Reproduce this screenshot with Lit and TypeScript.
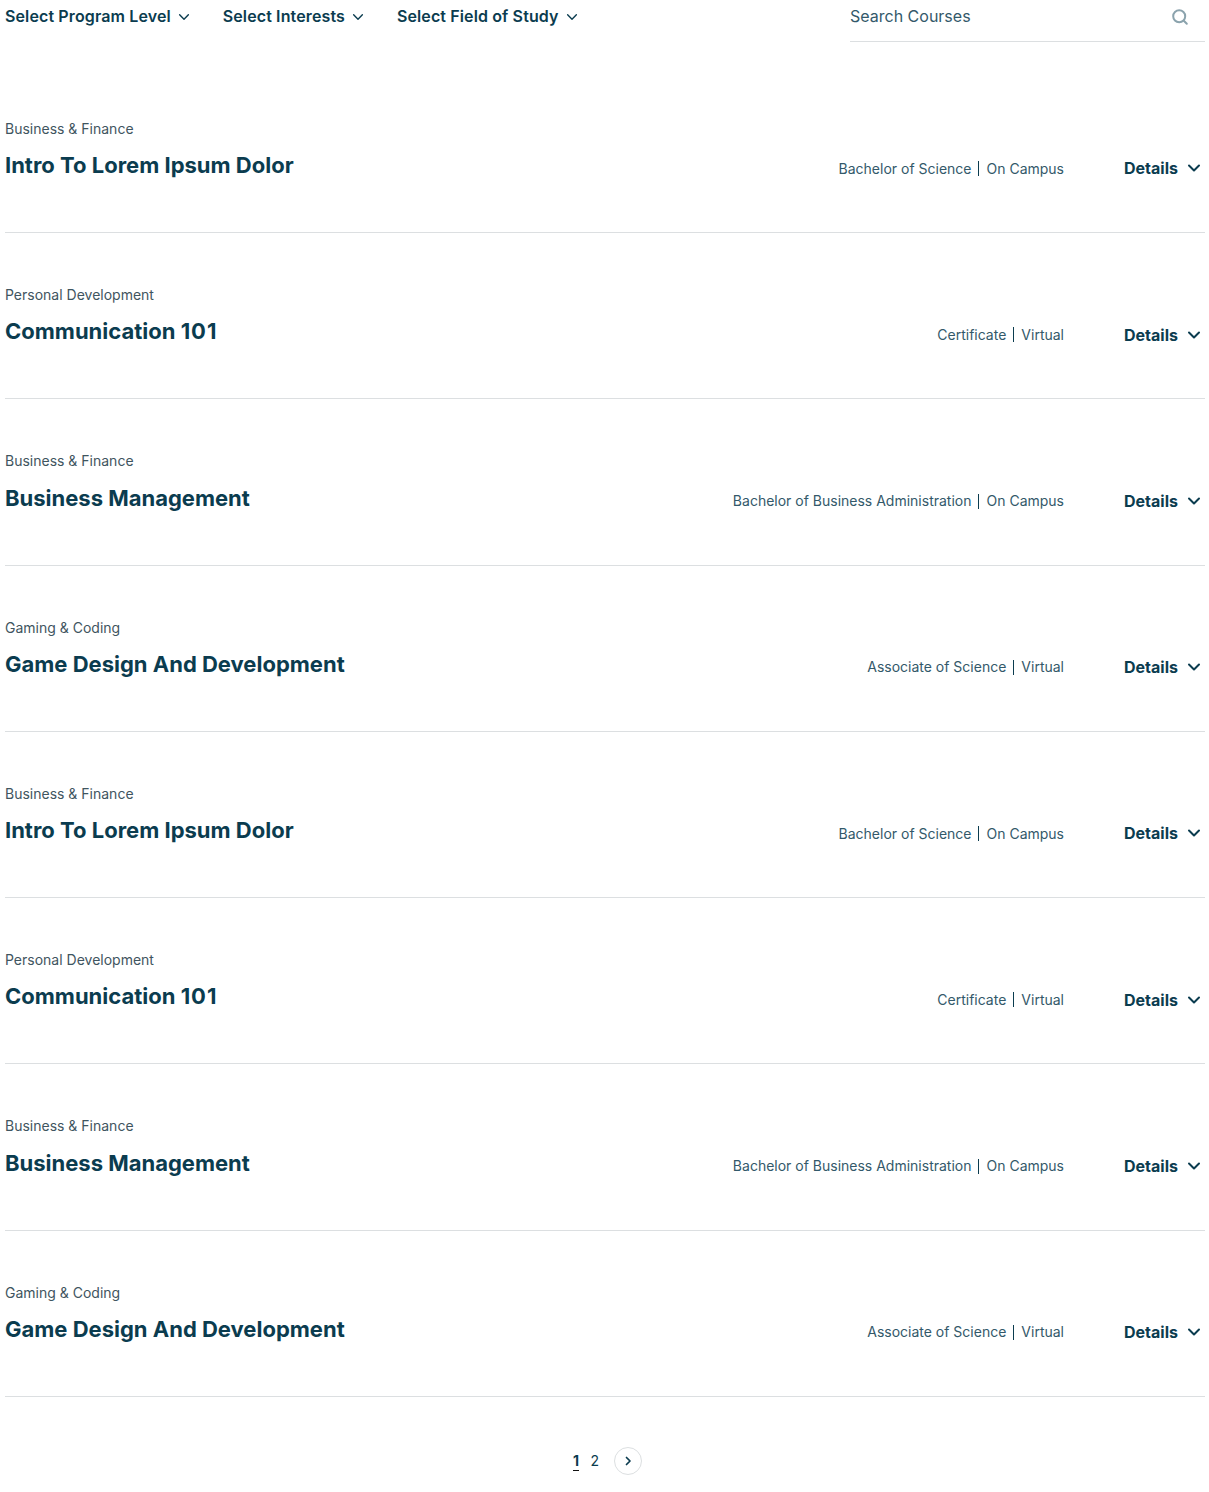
import { LitElement, html, css, svg } from 'lit';
import { customElement } from 'lit/decorators.js';

const chevron = (size: number, width: number) => html`
  <svg width=${size} height=${size} viewBox="0 0 16 16" fill="none" stroke="currentColor" stroke-width=${width} stroke-linecap="round" stroke-linejoin="round">
    ${svg`<path d="M3 5.5 8 10.5 13 5.5" />`}
  </svg>
`;

const courses = [
  { cat: 'Business & Finance', title: html`Intro To Lorem Ipsum Dolor`, degree: 'Bachelor of Science', mode: 'On Campus' },
  { cat: 'Personal Development', title: html`Communication <span class="num">101</span>`, degree: 'Certificate', mode: 'Virtual' },
  { cat: 'Business & Finance', title: html`Business Management`, degree: 'Bachelor of Business Administration', mode: 'On Campus' },
  { cat: 'Gaming & Coding', title: html`Game Design And Development`, degree: 'Associate of Science', mode: 'Virtual' }
];

@customElement('app-root')
export class AppRoot extends LitElement {
  static styles = css`
    :host {
      display: block;
      width: 1209px;
      height: 1492px;
      box-sizing: border-box;
      padding: 0 4px 0 5px;
      font-family: Inter, 'Liberation Sans', sans-serif;
      color: #0b3c4f;
      background: #fff;
    }

    .bar {
      display: flex;
      justify-content: space-between;
      height: 42px;
      margin-bottom: 24.9px;
    }

    .filters {
      display: flex;
      gap: 31.8px;
      padding-top: 6px;
    }

    .filter {
      display: flex;
      align-items: center;
      gap: 6.2px;
      height: 20px;
      font-size: 16px;
      font-weight: 600;
      letter-spacing: 0.12px;
    }

    .filter svg {
      margin-top: 1px;
    }

    .search {
      display: flex;
      justify-content: space-between;
      width: 355px;
      height: 42px;
      box-sizing: border-box;
      border-bottom: 1px solid #dcdfe1;
      padding: 6px 16px 0 0;
      font-size: 16px;
      line-height: 20px;
      color: #33596a;
    }

    .search svg {
      margin-top: 2px;
    }

    .row {
      display: flex;
      align-items: flex-start;
      height: 166.25px;
      box-sizing: border-box;
      padding-top: 52px;
      border-bottom: 1px solid #dcdfe1;
    }

    .main {
      flex: 1;
    }

    .cat {
      font-size: 14px;
      line-height: 20px;
      color: #3f5560;
    }

    .title {
      margin: 12.25px 0 0;
      font-size: 22px;
      line-height: 28px;
      font-weight: 700;
      color: #0b3c4f;
    }

    .num {
      letter-spacing: 1px;
    }

    .meta {
      display: flex;
      align-items: center;
      margin-top: 39.65px;
      font-size: 14px;
      line-height: 20px;
      color: #33596a;
    }

    .sep {
      width: 1px;
      height: 15px;
      margin: 0 7px;
      background: #0b3c4f;
    }

    .details {
      display: flex;
      align-items: center;
      gap: 8px;
      width: 141px;
      box-sizing: border-box;
      padding-left: 60px;
      margin-top: 39.5px;
      font-size: 16px;
      line-height: 20px;
      font-weight: 700;
    }

    .pager {
      display: flex;
      justify-content: center;
      align-items: center;
      gap: 8px;
      margin-top: 49.5px;
      padding-left: 5px;
      height: 30px;
      font-size: 14px;
      color: #0b3c4f;
    }

    .page {
      line-height: 18px;
    }

    .page.on {
      font-weight: 700;
      margin-right: 3.5px;
      border-bottom: 1px solid #111;
    }

    .next {
      display: flex;
      align-items: center;
      justify-content: center;
      width: 28px;
      height: 28px;
      box-sizing: border-box;
      margin-left: 7px;
      border: 1px solid #dcdfe1;
      border-radius: 50%;
    }
  `;

  render() {
    const rows = [...courses, ...courses];
    return html`
      <div class="bar">
        <div class="filters">
          ${['Select Program Level', 'Select Interests', 'Select Field of Study'].map(
            (f) => html`<div class="filter">${f} ${chevron(14, 1.6)}</div>`
          )}
        </div>
        <div class="search">
          Search Courses
          <svg width="18" height="18" viewBox="0 0 18 18" fill="none" stroke="#8ba3ad" stroke-width="2" stroke-linecap="round">
            ${svg`<circle cx="8.2" cy="8.2" r="6" /><path d="M12.8 12.8 15.8 15.8" />`}
          </svg>
        </div>
      </div>
      ${rows.map(
        (c) => html`
          <div class="row">
            <div class="main">
              <div class="cat">${c.cat}</div>
              <h3 class="title">${c.title}</h3>
            </div>
            <div class="meta">${c.degree}<span class="sep"></span>${c.mode}</div>
            <div class="details">Details ${chevron(16, 2)}</div>
          </div>
        `
      )}
      <div class="pager">
        <span class="page on">1</span>
        <span class="page">2</span>
        <span class="next">
          <svg width="12" height="12" viewBox="0 0 12 12" fill="none" stroke="#0b3c4f" stroke-width="1.7" stroke-linecap="round" stroke-linejoin="round">
            ${svg`<path d="M4.5 2.5 8 6 4.5 9.5" />`}
          </svg>
        </span>
      </div>
    `;
  }
}
